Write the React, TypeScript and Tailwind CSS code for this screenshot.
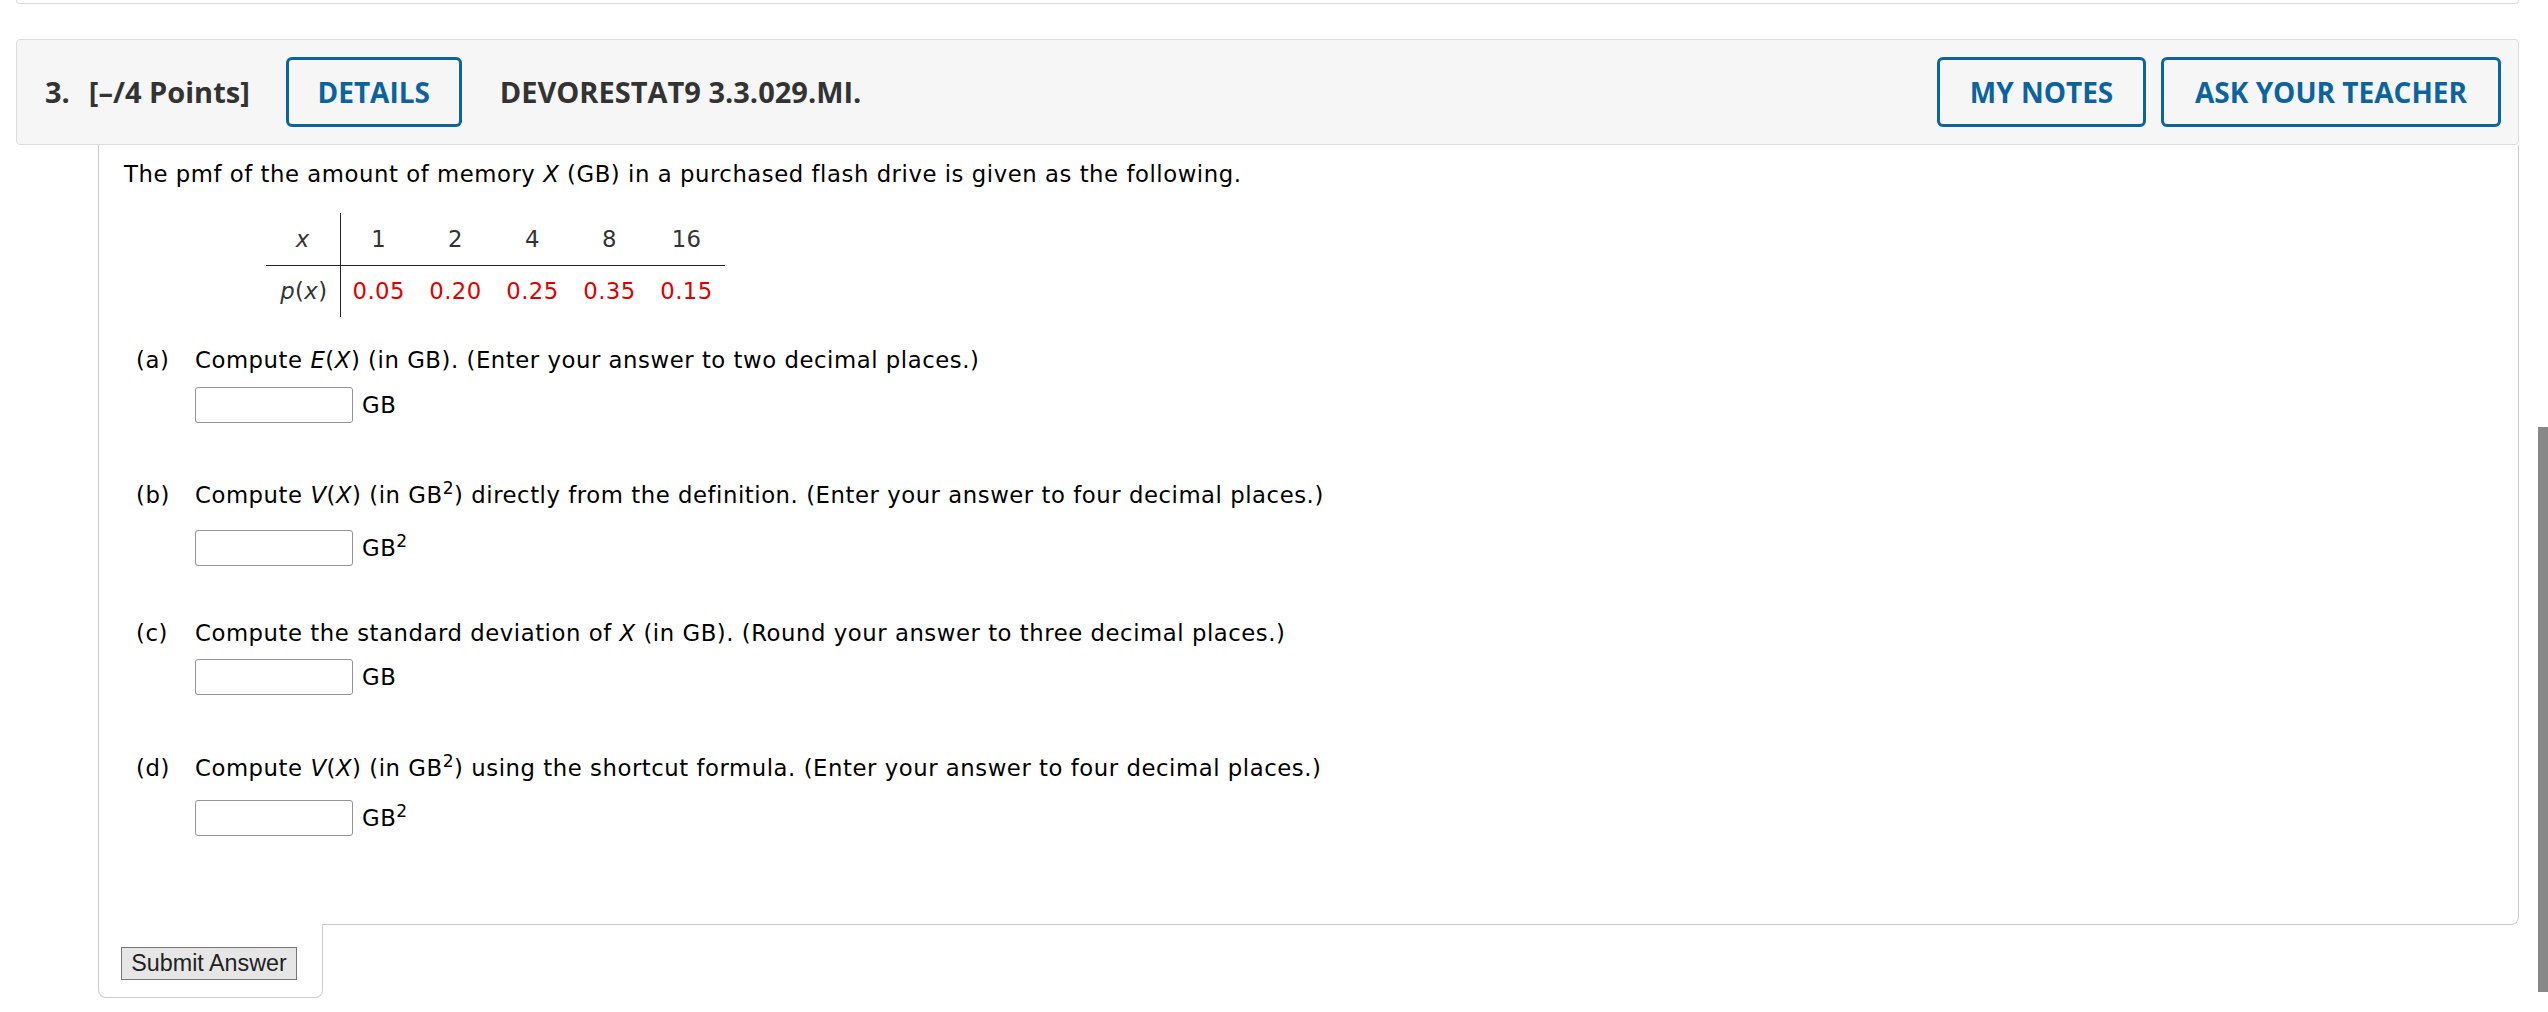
import React from 'react';

type Part = {
    label: string;
    text: React.ReactNode;
    squared: boolean;
    gapTop: string;
    gapInput: string;
};

const parts: Part[] = [
    {
        label: '(a)',
        text: <>Compute <i>E</i>(<i>X</i>) (in GB). (Enter your answer to two decimal places.)</>,
        squared: false,
        gapTop: 'mt-[29px]',
        gapInput: 'mt-[13px]',
    },
    {
        label: '(b)',
        text: <>Compute <i>V</i>(<i>X</i>) (in GB<sup>2</sup>) directly from the definition. (Enter your answer to four decimal places.)</>,
        squared: true,
        gapTop: 'mt-[58px]',
        gapInput: 'mt-[21px]',
    },
    {
        label: '(c)',
        text: <>Compute the standard deviation of <i>X</i> (in GB). (Round your answer to three decimal places.)</>,
        squared: false,
        gapTop: 'mt-[53px]',
        gapInput: 'mt-[12px]',
    },
    {
        label: '(d)',
        text: <>Compute <i>V</i>(<i>X</i>) (in GB<sup>2</sup>) using the shortcut formula. (Enter your answer to four decimal places.)</>,
        squared: true,
        gapTop: 'mt-[59px]',
        gapInput: 'mt-[18px]',
    },
];

const xs = ['1', '2', '4', '8', '16'];
const ps = ['0.05', '0.20', '0.25', '0.35', '0.15'];

const PmfTable: React.FC = () => (
    <table className="mt-[25px] ml-[142px] border-collapse text-[22.75px] tracking-[0.4px] text-[#333333]">
        <tbody>
            <tr className="h-[52px]">
                <td className="w-[74px] pr-[30px] text-right border-r border-b border-[#222222] italic">x</td>
                {xs.map(v => (
                    <td key={v} className="w-[77px] text-center border-b border-[#222222]">{v}</td>
                ))}
            </tr>
            <tr className="h-[52px]">
                <td className="w-[74px] pr-[12px] text-right border-r border-[#222222]"><i>p</i>(<i>x</i>)</td>
                {ps.map(v => (
                    <td key={v} className="w-[77px] text-center text-[#e00000]">{v}</td>
                ))}
            </tr>
        </tbody>
    </table>
);

const HeaderButton: React.FC<{ label: string; width: string }> = ({ label, width }) => (
    <button className={`${width} h-[70px] border-[3px] border-[#0b63a0] rounded-[6px] text-[#0b63a0] font-bold text-[28px]`}>
        {label}
    </button>
);

export default function App() {
    return (
        <div className="relative h-[1012px] w-[2548px] overflow-hidden bg-white">
            <div className="ml-[16px] w-[2503px]">
                {/* bottom edge of the previous question */}
                <div className="h-[4px] border-x border-b border-[#dddddd] rounded-b-[5px]" />

                <div className="mt-[35px] flex items-center h-[106px] border border-[#dddddd] bg-[#f6f6f6] rounded-[4px] pl-[28px] pr-[17px] font-['Open_Sans',sans-serif] text-[29px] text-[#333333]">
                    <span className="font-bold">3.</span>
                    <span className="ml-[19px] font-bold">[–/4 Points]</span>
                    <div className="ml-[36px]">
                        <HeaderButton label="DETAILS" width="w-[176px]" />
                    </div>
                    <span className="ml-[38px] font-bold">DEVORESTAT9 3.3.029.MI.</span>
                    <div className="ml-auto flex gap-[15px]">
                        <HeaderButton label="MY NOTES" width="w-[209px]" />
                        <HeaderButton label="ASK YOUR TEACHER" width="w-[340px]" />
                    </div>
                </div>

                <div className="ml-[82px] border-l border-r border-b border-[#cccccc] rounded-br-[8px] pt-[15px] pl-[25px] pb-[88px] font-['DejaVu_Sans','Verdana',sans-serif] text-[22.75px] tracking-[0.55px] leading-[28px] text-black">
                    <p className="h-[28px]">
                        The pmf of the amount of memory <i>X</i> (GB) in a purchased flash drive is given as the following.
                    </p>

                    <PmfTable />

                    {parts.map(part => (
                        <div key={part.label} className={`${part.gapTop} ml-[12px]`}>
                            <div className="flex h-[28px]">
                                <span className="w-[59px] shrink-0">{part.label}</span>
                                <span>{part.text}</span>
                            </div>
                            <div className={`${part.gapInput} ml-[59px] flex items-center gap-[9px]`}>
                                <input type="text" className="w-[158px] h-[36px] border border-[#949494] rounded-[3px] bg-white" />
                                <span>GB{part.squared && <sup>2</sup>}</span>
                            </div>
                        </div>
                    ))}
                </div>

                <div className="relative -mt-px ml-[82px] w-[225px] bg-white border-l border-r border-b border-[#cccccc] rounded-b-[8px] pt-[23px] pb-[17px] pl-[22px]">
                    <button className="w-[176px] h-[33px] bg-[#e6e6e6] border border-[#767676] text-[#222222] text-[23.3px] leading-none font-['Liberation_Sans',Arial,sans-serif]">
                        Submit Answer
                    </button>
                </div>
            </div>

            {/* page scrollbar thumb */}
            <div className="absolute right-0 top-[427px] w-[10px] h-[565px] bg-[#888888]" />
        </div>
    );
}
